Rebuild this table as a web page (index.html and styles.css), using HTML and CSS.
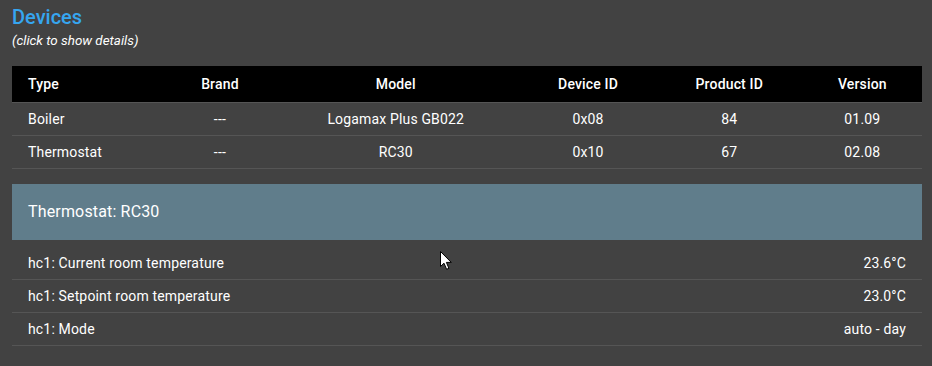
FILE: index.html
```html
<!DOCTYPE html>
<html>
<head>
<meta charset="utf-8">
<link rel="stylesheet" href="styles.css">
</head>
<body>
<div class="page">
  <h2 class="title">Devices</h2>
  <p class="hint">(click to show details)</p>

  <table class="devices">
    <thead>
      <tr>
        <th class="left">Type</th>
        <th>Brand</th>
        <th>Model</th>
        <th>Device ID</th>
        <th>Product ID</th>
        <th>Version</th>
      </tr>
    </thead>
    <tbody>
      <tr>
        <td class="left">Boiler</td>
        <td>---</td>
        <td>Logamax Plus GB022</td>
        <td>0x08</td>
        <td>84</td>
        <td>01.09</td>
      </tr>
      <tr>
        <td class="left">Thermostat</td>
        <td>---</td>
        <td>RC30</td>
        <td>0x10</td>
        <td>67</td>
        <td>02.08</td>
      </tr>
    </tbody>
  </table>

  <div class="panel">Thermostat: RC30</div>

  <div class="values">
    <div class="value-row"><span>hc1: Current room temperature</span><span>23.6°C</span></div>
    <div class="value-row"><span>hc1: Setpoint room temperature</span><span>23.0°C</span></div>
    <div class="value-row"><span>hc1: Mode</span><span>auto - day</span></div>
  </div>

  <svg class="pointer" width="13" height="20" viewBox="0 0 13 20">
    <path d="M0.5 0.5 L0.5 15.5 L4 12.2 L6.6 18.3 L8.9 17.3 L6.4 11.4 L11.3 11.4 Z" fill="#fff" stroke="#000" stroke-width="1"/>
  </svg>
</div>
</body>
</html>
```

FILE: styles.css
```css
html, body {
  margin: 0;
  padding: 0;
  background: #424242;
}

body {
  font-family: Roboto, "Liberation Sans", sans-serif;
  color: #fff;
  letter-spacing: 0.01em;
}

.page {
  position: relative;
  padding: 4px 10px 0 12px;
}

.title {
  margin: 0;
  font-size: 20px;
  font-weight: 500;
  line-height: 26px;
  color: #36a6f0;
  letter-spacing: 0;
}

.hint {
  margin: 3px 0 0 0;
  font-size: 13.4px;
  font-weight: 400;
  font-style: italic;
  line-height: 16px;
  color: #fff;
  letter-spacing: 0;
}

.devices {
  margin-top: 17px;
  width: 910px;
  border-collapse: collapse;
  font-size: 14px;
}

.devices th {
  background: #000;
  height: 36px;
  padding: 0 16px;
  font-weight: 500;
  text-align: center;
  border-bottom: 1px solid #555;
  box-sizing: border-box;
}

.devices td {
  height: 33px;
  padding: 0 16px;
  text-align: center;
  border-bottom: 1px solid #555;
  box-sizing: border-box;
}

.devices .left {
  text-align: left;
}

.panel {
  margin-top: 15px;
  width: 910px;
  height: 56px;
  box-sizing: border-box;
  padding: 0 16px;
  display: flex;
  align-items: center;
  background: #607d8b;
  font-size: 16px;
}

.values {
  margin-top: 7px;
  width: 910px;
  font-size: 14px;
}

.value-row {
  height: 33px;
  box-sizing: border-box;
  padding: 0 16px;
  display: flex;
  align-items: center;
  justify-content: space-between;
  border-bottom: 1px solid #555;
}

.pointer {
  position: absolute;
  left: 440px;
  top: 251px;
}
```
